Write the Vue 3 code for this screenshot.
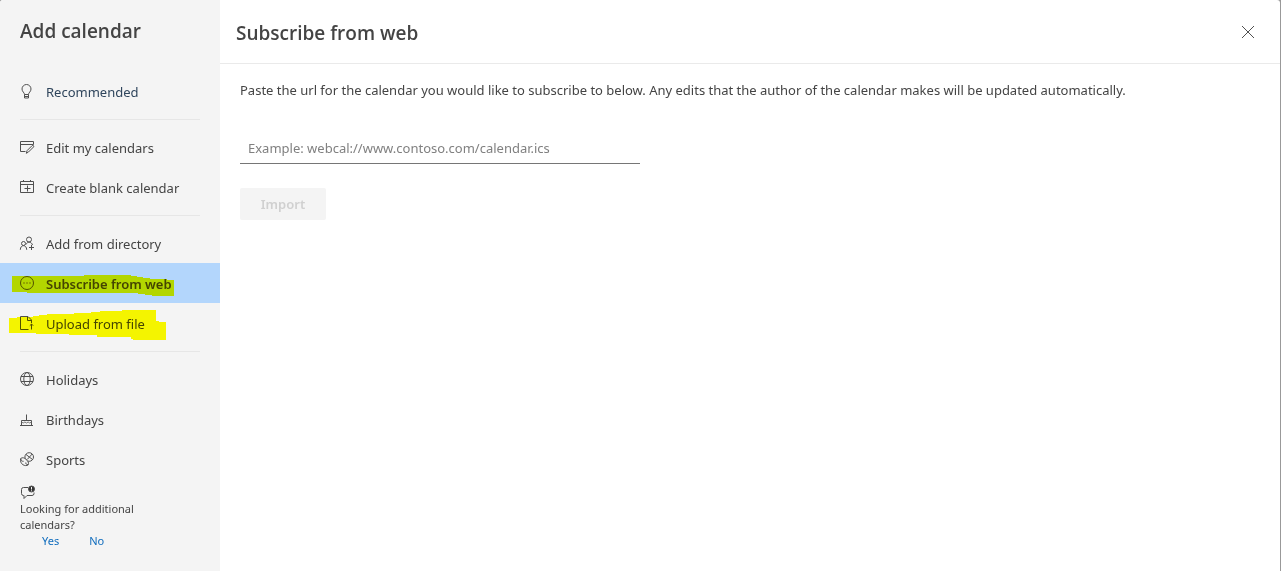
<script setup>
import { ref } from 'vue'

const groups = [
  [{ id: 'recommended', label: 'Recommended' }],
  [
    { id: 'edit', label: 'Edit my calendars' },
    { id: 'create', label: 'Create blank calendar' },
  ],
  [
    { id: 'directory', label: 'Add from directory' },
    { id: 'web', label: 'Subscribe from web' },
    { id: 'file', label: 'Upload from file' },
  ],
  [
    { id: 'holidays', label: 'Holidays' },
    { id: 'birthdays', label: 'Birthdays' },
    { id: 'sports', label: 'Sports' },
  ],
]
const active = ref('web')
const url = ref('')
</script>

<template>
  <div class="dialog">
    <aside class="sidebar">
      <h1 class="sidebar-title">Add calendar</h1>
      <nav class="nav" aria-label="Add calendar">
        <ul v-for="(group, i) in groups" :key="i" class="group">
          <li v-for="item in group" :key="item.id">
            <button
              type="button"
              class="item"
              :class="[item.id, { active: active === item.id }]"
              @click="active = item.id"
            >
              <svg class="icon" viewBox="0 0 16 16" aria-hidden="true">
                <g v-if="item.id === 'recommended'">
                  <path d="M5.500 10.500C5.500 8.500 3 7.800 3 5a4.500 4.500 0 0 1 9 0C12 7.800 9.500 8.500 9.500 10.500z" />
                  <path d="M5.500 10.500v3.500h4v-3.500M5.500 12.500h4" />
                </g>
                <g v-else-if="item.id === 'edit'">
                  <path d="M6.500 11.500H1.500V1.500h13v3M1.500 4.500h13" />
                  <path d="M7.300 13.300l.8-2.700 5-5c1-.8 2.200.4 1.400 1.400l-5 5z" />
                </g>
                <g v-else-if="item.id === 'create'">
                  <path d="M1.500 1.500h13v11h-13zM1.500 4.500h13M4.500 0v1.500M11.500 0v1.500M8.500 5.500v6M5.500 8.500h6" />
                </g>
                <g v-else-if="item.id === 'directory'">
                  <circle cx="10" cy="3.500" r="2.500" />
                  <circle cx="4.500" cy="7.500" r="2" />
                  <path d="M1.300 13.800c0-5.500 6.400-5.500 6.400 0M7 8.500C8 5.500 12.500 5.300 13.500 9M12.500 9v5M10 11.500h5" />
                </g>
                <g v-else-if="item.id === 'web'">
                  <circle cx="8" cy="7" r="6.500" />
                  <path class="dots" d="M4 7h2M7 7h2M10 7h2" />
                </g>
                <g v-else-if="item.id === 'file'">
                  <path d="M9.500 13.500h-8v-13h7.500l3.500 3.500v3M8.500 .5v4H12.500M12.500 13.500V8M10.800 9.700l1.700-1.700 1.700 1.700" />
                </g>
                <g v-else-if="item.id === 'holidays'">
                  <circle cx="8" cy="7" r="6.500" />
                  <ellipse cx="8" cy="7" rx="3.200" ry="6.500" />
                  <path d="M2 4.500h12M2 9.500h12" />
                </g>
                <g v-else-if="item.id === 'birthdays'">
                  <path d="M1 13.500h13M2.500 13.500v-5h10v5M7.500 2.500v5.500" />
                  <path class="icing" d="M2.500 10l1.700 1 1.700-1 1.600 1 1.600-1 1.600 1 1.800-1" />
                </g>
                <g v-else>
                  <circle cx="10.200" cy="5" r="4.300" />
                  <path d="M7 2.500l6.500 5M13.200 2l-5 5.500" />
                  <path class="front" d="M1.600 6.500c2.200-1.600 4-.4 5.400.8 1.800 1.500 3.200 3.600 2.200 5.600-3 2-8.600-.4-7.600-6.400z" />
                  <path d="M1.800 7c.2 1.800 1.400 2.500 2.800 2.300M9 12.500c-1.600.2-2.500-.8-2.200-2" />
                </g>
              </svg>
              <span>{{ item.label }}</span>
            </button>
          </li>
        </ul>
        <svg class="marker" viewBox="0 0 180 72" aria-hidden="true">
          <path d="M12 6H84V5H131V6H137V7H143V8H150V9H167V10H174V26H152V25H145V24H138V23H27V22H12z" />
          <path d="M9 48H17V47H33V46H39V45H47V44H74V43H91V42H100V41H122V40H156V51H159V52H166V70H133V69H131V67H97V65H69V64H36V63H9z" />
        </svg>
      </nav>
      <footer class="more">
        <svg class="feedback" viewBox="0 0 16 16" aria-hidden="true">
          <path d="M8 2.500H3.500a2 2 0 0 0-2 2v4a2 2 0 0 0 2 2h.5v3l3-3h5a2 2 0 0 0 2-2V7.500" />
          <circle class="dot" cx="11.500" cy="4" r="3" />
          <path class="mark" d="M11.500 2v2.500M11.500 5.300v1" />
        </svg>
        <p>Looking for additional calendars?</p>
        <div class="answers">
          <a href="#yes">Yes</a>
          <a href="#no">No</a>
        </div>
      </footer>
    </aside>

    <main class="main">
      <header class="header">
        <h2>Subscribe from web</h2>
        <button type="button" class="close" aria-label="Close">
          <svg viewBox="0 0 14 14" aria-hidden="true"><path d="M1 1l12 12M13 1L1 13" /></svg>
        </button>
      </header>
      <form class="form" @submit.prevent>
        <label for="calendar-url">Paste the url for the calendar you would like to subscribe to below. Any edits that the author of the calendar makes will be updated automatically.</label>
        <input id="calendar-url" v-model="url" type="text" placeholder="Example: webcal://www.contoso.com/calendar.ics" />
        <button type="submit" class="import" :disabled="!url">Import</button>
      </form>
    </main>
  </div>
</template>

<style>
body {
  background: #999;
}
</style>

<style scoped>
.dialog {
  display: flex;
  min-height: 100vh;
  margin-right: 1px;
  border-radius: 3px 3px 0 0;
  overflow: hidden;
  background: #fff;
  color: #444;
  font-family: "Segoe UI", "Noto Sans", "Open Sans", sans-serif;
  font-size: 13px;
  line-height: 20px;
}
* {
  box-sizing: border-box;
}
.sidebar {
  flex: 0 0 220px;
  background: #f4f4f4;
}
h1,
h2 {
  margin: 0;
  font-family: "Segoe UI", "Open Sans", "Noto Sans", sans-serif;
  font-size: 19px;
  line-height: 28px;
  font-weight: 600;
}
.sidebar-title {
  padding: 17px 20px 26px;
}
.nav {
  position: relative;
}
.group {
  margin: 0;
  padding: 0;
  list-style: none;
}
.group + .group::before {
  content: "";
  display: block;
  height: 1px;
  margin: 8px 20px 7px;
  background: #e6e6e6;
}
.item {
  display: flex;
  align-items: center;
  gap: 11px;
  width: 100%;
  height: 40px;
  padding: 1px 19px 0;
  border: 0;
  background: transparent;
  color: inherit;
  font: inherit;
  text-align: left;
}
.item.recommended {
  color: #2f455c;
}
.item.active {
  background: #b3d6fc;
  font-weight: 600;
}
.icon {
  flex: none;
  width: 16px;
  height: 16px;
}
svg path,
svg circle,
svg ellipse {
  fill: none;
  stroke: #505050;
  stroke-width: 1;
}
.icon .front {
  fill: #f4f4f4;
}
.icon .icing,
.icon .dots {
  stroke: #777;
}
.marker {
  position: absolute;
  top: 199px;
  left: 0;
  width: 180px;
  height: 72px;
  pointer-events: none;
  mix-blend-mode: multiply;
}
.marker path {
  fill: #ff0;
  stroke: none;
}
.more {
  padding: 6px 60px 20px 20px;
  font-size: 11px;
  line-height: 16px;
}
.feedback {
  display: block;
  width: 16px;
  height: 16px;
}
.feedback .dot {
  fill: #333;
}
.feedback .mark {
  stroke: #f4f4f4;
}
.more p {
  margin: 0;
}
.answers {
  display: flex;
  gap: 30px;
  padding-left: 22px;
}
.answers a {
  color: #0f6cbd;
  text-decoration: none;
}
.main {
  flex: 1;
  min-width: 0;
}
.header {
  display: flex;
  align-items: center;
  justify-content: space-between;
  height: 64px;
  padding: 2px 24px 0 16px;
  border-bottom: 1px solid #eaeaea;
}
.close {
  display: flex;
  padding: 1px 1px 3px;
  border: 0;
  background: transparent;
}
.close svg {
  width: 14px;
  height: 14px;
}
.form {
  display: flex;
  flex-direction: column;
  align-items: flex-start;
  padding: 16px 20px;
}
.form input {
  width: 400px;
  max-width: 100%;
  height: 32px;
  margin-top: 32px;
  padding: 0 8px;
  border: 0;
  border-bottom: 1px solid #767676;
  background: transparent;
  color: inherit;
  font: inherit;
  outline: 0;
}
.form input::placeholder {
  color: #808080;
  opacity: 1;
}
.import {
  min-width: 86px;
  height: 32px;
  margin-top: 24px;
  padding: 0 20px;
  border: 0;
  border-radius: 2px;
  background: #f4f4f4;
  color: #0f6cbd;
  font: inherit;
  font-weight: 600;
}
.import:disabled {
  color: #d0d0d0;
}
</style>
